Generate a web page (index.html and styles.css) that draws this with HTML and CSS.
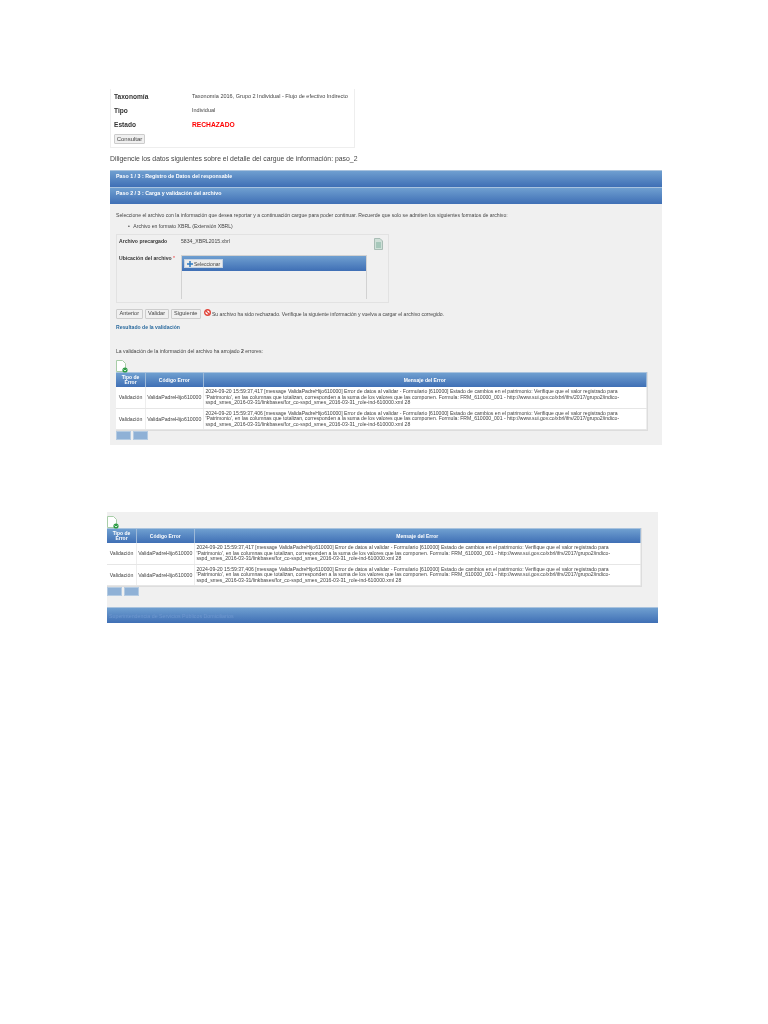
FILE: index.html
```html
<!DOCTYPE html>
<html lang="es">
<head>
<meta charset="utf-8">
<title>Cargue de información</title>
<link rel="stylesheet" href="styles.css">
</head>
<body>
<main class="page">
  <section class="shot shot-one">
    <div class="summary">
      <div class="summary-row"><span class="summary-label">Taxonomía</span><span class="summary-value">Taxonomía 2016, Grupo 2 Individual - Flujo de efectivo Indirecto</span></div>
      <div class="summary-row"><span class="summary-label">Tipo</span><span class="summary-value">Individual</span></div>
      <div class="summary-row"><span class="summary-label">Estado</span><span class="summary-status">RECHAZADO</span></div>
      <button class="btn btn-consult">Consultar</button>
    </div>
    <p class="intro">Diligencie los datos siguientes sobre el detalle del cargue de información: paso_2</p>
    <div class="bar">Paso 1 / 3 : Registro de Datos del responsable</div>
    <div class="bar">Paso 2 / 3 : Carga y validación del archivo</div>
    <div class="panel">
      <p class="lead">Seleccione el archivo con la información que desea reportar y a continuación cargue para poder continuar. Recuerde que solo se admiten los siguientes formatos de archivo:</p>
      <ul class="formats"><li>Archivo en formato XBRL (Extensión XBRL)</li></ul>
      <div class="upload-box">
        <div class="upload-labels">
          <div class="upload-label upload-label-first">Archivo precargado</div>
          <div class="upload-label">Ubicación del archivo <span class="req">*</span></div>
        </div>
        <div class="upload-main">
          <div class="upload-file">
            <span>5834_XBRL2015.xbrl</span>
            <svg class="doc-icon" viewBox="0 0 9 12"><path d="M.5.5h5.5l2.5 2.5v8.5h-8z" fill="#cfe0d8" stroke="#a9bdb5"/><path d="M2 5h5M2 7h5M2 9h5" stroke="#6aa58f" stroke-width=".8"/></svg>
          </div>
          <div class="chooser">
            <div class="chooser-bar"><span class="choose-btn"><svg class="plus" viewBox="0 0 8 8"><path d="M3 0h2v3h3v2H5v3H3V5H0V3h3z" fill="#2f7ac0"/></svg>Seleccionar</span></div>
            <div class="chooser-body"></div>
          </div>
        </div>
      </div>
      <div class="actions">
        <button class="btn">Anterior</button>
        <button class="btn">Validar</button>
        <button class="btn">Siguiente</button>
        <svg class="stop-icon" viewBox="0 0 8 8"><circle cx="4" cy="4" r="3.2" fill="#fff" stroke="#e0443a" stroke-width="1.6"/><path d="M2 2l4 4" stroke="#e0443a" stroke-width="1.3"/></svg>
        <span class="action-msg">Su archivo ha sido rechazado. Verifique la siguiente información y vuelva a cargar el archivo corregido.</span>
      </div>
      <a class="result-link">Resultado de la validación</a>
      <p class="count">La validación de la información del archivo ha arrojado <b>2</b> errores:</p>
      <svg class="xls-icon" viewBox="0 0 12 13"><path d="M.5.5h6l3 3v8h-9z" fill="#fff" stroke="#a8cda8"/><circle cx="9" cy="10" r="2.6" fill="#2e9c46"/><path d="M7.6 9.6L9 11l1.4-1.4" stroke="#fff" fill="none" stroke-width=".8"/></svg>
      <div class="grid">
        <div class="grid-head"><span>Tipo de<br>Error</span><span>Código Error</span><span>Mensaje del Error</span></div>
        <div class="grid-row"><span>Validación</span><span>ValidaPadreHijo610000</span><span class="msg">2024-09-20 15:59:37,417 [message ValidaPadreHijo610000] Error de datos al validar - Formulario [610000] Estado de cambios en el patrimonio: Verifique que el valor registrado para<br>'Patrimonio', en las columnas que totalizan, corresponden a la suma de los valores que las componen. Formula: FRM_610000_001 - http://www.sui.gov.co/xbrl/ifrs/2017/grupo2/indico-<br>sspd_smes_2016-03-31/linkbases/for_co-sspd_smes_2016-03-31_role-ind-610000.xml 28</span></div>
        <div class="grid-row"><span>Validación</span><span>ValidaPadreHijo610000</span><span class="msg">2024-09-20 15:59:37,406 [message ValidaPadreHijo610000] Error de datos al validar - Formulario [610000] Estado de cambios en el patrimonio: Verifique que el valor registrado para<br>'Patrimonio', en las columnas que totalizan, corresponden a la suma de los valores que las componen. Formula: FRM_610000_001 - http://www.sui.gov.co/xbrl/ifrs/2017/grupo2/indico-<br>sspd_smes_2016-03-31/linkbases/for_co-sspd_smes_2016-03-31_role-ind-610000.xml 28</span></div>
      </div>
      <div class="pager"><span class="page-btn"></span><span class="page-btn"></span></div>
    </div>
  </section>

  <section class="shot shot-two">
    <div class="panel panel-two">
      <svg class="xls-icon" viewBox="0 0 12 13"><path d="M.5.5h6l3 3v8h-9z" fill="#fff" stroke="#a8cda8"/><circle cx="9" cy="10" r="2.6" fill="#2e9c46"/><path d="M7.6 9.6L9 11l1.4-1.4" stroke="#fff" fill="none" stroke-width=".8"/></svg>
      <div class="grid">
        <div class="grid-head"><span>Tipo de<br>Error</span><span>Código Error</span><span>Mensaje del Error</span></div>
        <div class="grid-row"><span>Validación</span><span>ValidaPadreHijo610000</span><span class="msg">2024-09-20 15:59:37,417 [message ValidaPadreHijo610000] Error de datos al validar - Formulario [610000] Estado de cambios en el patrimonio: Verifique que el valor registrado para<br>'Patrimonio', en las columnas que totalizan, corresponden a la suma de los valores que las componen. Formula: FRM_610000_001 - http://www.sui.gov.co/xbrl/ifrs/2017/grupo2/indico-<br>sspd_smes_2016-03-31/linkbases/for_co-sspd_smes_2016-03-31_role-ind-610000.xml 28</span></div>
        <div class="grid-row"><span>Validación</span><span>ValidaPadreHijo610000</span><span class="msg">2024-09-20 15:59:37,406 [message ValidaPadreHijo610000] Error de datos al validar - Formulario [610000] Estado de cambios en el patrimonio: Verifique que el valor registrado para<br>'Patrimonio', en las columnas que totalizan, corresponden a la suma de los valores que las componen. Formula: FRM_610000_001 - http://www.sui.gov.co/xbrl/ifrs/2017/grupo2/indico-<br>sspd_smes_2016-03-31/linkbases/for_co-sspd_smes_2016-03-31_role-ind-610000.xml 28</span></div>
      </div>
      <div class="pager"><span class="page-btn"></span><span class="page-btn"></span></div>
    </div>
    <div class="footer-bar">Superintendencia de Servicios Públicos Domiciliarios</div>
  </section>
</main>
</body>
</html>
```

FILE: styles.css
```css
* { box-sizing: border-box; }

html, body {
  margin: 0;
  background: #fff;
}

body {
  font-family: "Liberation Sans", Arial, sans-serif;
  color: #444;
}

.page {
  width: 768px;
  height: 1024px;
  padding-top: 90px;
  overflow: hidden;
}

.shot {
  filter: blur(0.5px);
}

.shot-one {
  width: 552px;
  margin-left: 110px;
}

.shot-two {
  width: 551px;
  margin-left: 107px;
  margin-top: 67px;
}

/* Summary */
.summary {
  width: 245px;
  height: 59px;
  margin-top: -1px;
  padding: 0 0 0 3px;
  border-right: 1px solid #eee;
  border-bottom: 1px solid #eee;
  border-left: 1px solid #eee;
}

.summary-row {
  display: flex;
  align-items: center;
  height: 14px;
}

.summary-label {
  width: 78px;
  font-size: 6.6px;
  font-weight: bold;
  color: #333;
}

.summary-value {
  font-size: 5.5px;
  color: #444;
}

.summary-status {
  font-size: 6.7px;
  font-weight: bold;
  color: #f00;
}

.btn {
  height: 10px;
  margin: 0;
  padding: 0 2.5px;
  border: 1px solid #ccc;
  border-radius: 1px;
  background: #f0f0f0;
  font-family: inherit;
  font-size: 5.6px;
  line-height: 1;
  color: #444;
}

.btn-consult {
  display: block;
  width: 31px;
  margin-top: 3px;
  padding: 0;
  font-size: 6px;
}

.intro {
  margin: 6px 0 0;
  height: 16px;
  font-size: 6.87px;
  line-height: 9px;
  color: #444;
}

/* Bars */
.bar, .footer-bar {
  background: linear-gradient(#6f9fd0, #3f6fb5);
  border-top: 1px solid #a9c3de;
  color: #fff;
}

.bar {
  height: 17px;
  padding-left: 6px;
  font-size: 5.3px;
  font-weight: bold;
  line-height: 10px;
}

.panel {
  height: 241px;
  padding: 8px 6px 0;
  background: #f0f0f0;
}

.lead {
  margin: 0;
  font-size: 5.12px;
  line-height: 7px;
}

.formats {
  margin: 4px 0 0;
  padding: 0 0 0 12px;
  list-style: none;
  font-size: 5.12px;
  line-height: 7px;
}

.formats li::before {
  content: "•";
  margin-right: 3.5px;
}

/* Upload box */
.upload-box {
  display: flex;
  width: 273px;
  height: 69px;
  margin-top: 4px;
  border: 1px solid #e2e2e2;
}

.upload-labels {
  width: 64px;
  padding-left: 2px;
}

.upload-label {
  font-size: 5.1px;
  font-weight: bold;
  color: #333;
}

.upload-label-first {
  margin: 3px 0 11px;
}

.req {
  color: #e33;
  font-weight: normal;
}

.upload-main {
  flex: 1;
  padding-left: 0;
}

.upload-file {
  display: flex;
  justify-content: space-between;
  height: 20px;
  padding: 3px 5px 0 0;
  font-size: 5.15px;
}

.doc-icon {
  width: 9px;
  height: 12px;
  margin-top: 0;
}

.chooser {
  width: 186px;
  height: 44px;
  border: 1px solid #d2d2d2;
  margin-top: 0;
}

.chooser-bar {
  display: flex;
  align-items: center;
  height: 15px;
  padding-left: 2px;
  background: linear-gradient(#6f9fd0, #3f6fb5);
}

.choose-btn {
  display: flex;
  align-items: center;
  gap: 1.5px;
  height: 9px;
  padding: 0 2px 0 1.5px;
  border: 1px solid #c7d3e2;
  background: #ececec;
  font-size: 5px;
}

.plus {
  width: 6px;
  height: 6px;
}

.chooser-body {
  height: 28px;
  background: #f0f0f0;
}

/* Actions */
.actions {
  display: flex;
  align-items: center;
  gap: 2px;
  height: 11px;
  margin-top: 5px;
}

.stop-icon {
  width: 7px;
  height: 7px;
  margin: -3px 0 0 1px;
  flex: none;
}

.action-msg {
  margin-left: -1px;
  font-size: 5.1px;
}

.result-link {
  display: block;
  margin-top: 5px;
  font-size: 5.1px;
  line-height: 6px;
  font-weight: bold;
  color: #2a6a9e;
}

.count {
  margin: 18px 0 0;
  font-size: 5.12px;
  line-height: 7px;
}

.xls-icon {
  display: block;
  width: 12px;
  height: 13px;
  margin: 5px 0 -1px;
}

/* Grid */
.grid {
  width: 532px;
  border-right: 1px solid #ddd;
  border-bottom: 1px solid #ddd;
  background: #fff;
}

.grid-head, .grid-row {
  display: grid;
  grid-template-columns: 30px 57.5px 1fr;
}

.grid-head {
  height: 15px;
  background: linear-gradient(#6f9fd0, #3f6fb5);
  border-top: 1px solid #a9c3de;
  color: #fff;
  font-size: 5px;
  font-weight: bold;
  line-height: 5px;
  text-align: center;
}

.grid-head span {
  display: flex;
  align-items: center;
  justify-content: center;
  border-right: 1px solid #9db9d8;
}

.grid-row {
  height: 21.5px;
  border-bottom: 1px solid #e6e6e6;
  font-size: 5.2px;
}

.grid-row span {
  display: flex;
  align-items: center;
  justify-content: center;
  border-right: 1px solid #eee;
}

.grid-row .msg {
  display: block;
  padding: 2px 0 0 2px;
  line-height: 5.7px;
  font-size: 5.12px;
  white-space: nowrap;
}

.pager {
  display: flex;
  gap: 2px;
  margin-top: 0;
}

.page-btn {
  width: 15px;
  height: 9px;
  background: #8fb1d6;
  border: 1px solid #b4cbe2;
}

/* Second block */
.panel-two {
  height: 95px;
  padding: 4px 0 0;
}

.panel-two .xls-icon {
  margin: 0 0 -1px;
}

.panel-two .grid {
  width: 535px;
}

.footer-bar {
  height: 16px;
  padding-left: 2px;
  font-size: 5.3px;
  line-height: 16px;
  color: #6e97cf;
}
```
